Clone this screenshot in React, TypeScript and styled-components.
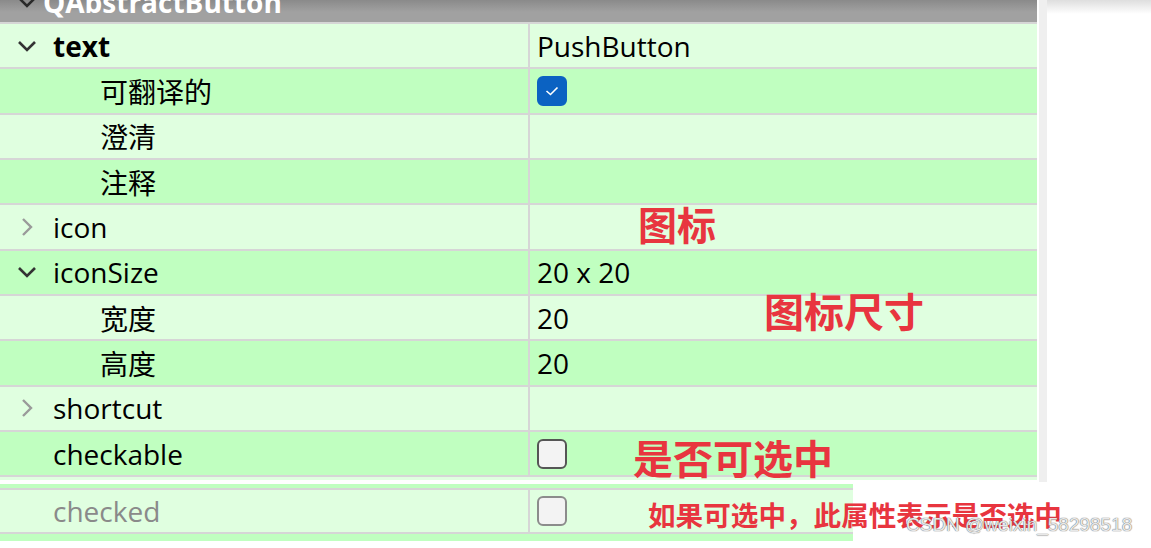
import React from 'react';
import styled, { createGlobalStyle } from 'styled-components';

const GlobalStyle = createGlobalStyle`
    html, body {
        margin: 0;
        padding: 0;
        background: #ffffff;
    }
    body {
        font-family: 'Open Sans', 'Noto Sans CJK SC', sans-serif;
    }
`;

const LIGHT = '#e0ffe0';
const DARK = '#c0ffc0';
const LINE = '#d6d6d6';

const Page = styled.div`
    position: relative;
    width: 1151px;
    height: 548px;
    overflow: hidden;
    display: flex;
    flex-direction: column;
`;

const TopArea = styled.div`
    display: flex;
    height: 480px;
`;

const Panel = styled.div`
    width: 1037px;
    height: 480px;
    overflow: hidden;
    background: ${LIGHT};
    display: flex;
    flex-direction: column;
`;

const Scrollbar = styled.div`
    width: 8px;
    height: 482px;
    margin-left: 2px;
    background: #efefef;
`;

const RightShade = styled.div`
    flex: 1;
    background: linear-gradient(#dedede, #ffffff 14px);
`;

const Header = styled.div`
    height: 22px;
    flex-shrink: 0;
    overflow: hidden;
    display: flex;
    align-items: flex-end;
    background: linear-gradient(#8a8a8a, #a1a1a1 12px);
    border-bottom: 2px solid ${LINE};
`;

const HeaderInner = styled.div`
    height: 40px;
    flex-shrink: 0;
    display: flex;
    align-items: center;
    color: #ffffff;
    font-size: 28px;
    font-weight: 700;
`;

const Row = styled.div<{ $tone: string; $h?: number }>`
    display: grid;
    grid-template-columns: 528px 2px 1fr;
    height: ${({ $h }) => $h || 43.33}px;
    flex-shrink: 0;
    background: ${({ $tone }) => $tone};
    border-bottom: 2px solid ${LINE};
`;

const Divider = styled.div`
    background: ${LINE};
`;

const LabelCell = styled.div<{ $child?: boolean; $bold?: boolean; $muted?: boolean }>`
    display: flex;
    align-items: center;
    padding-left: ${({ $child }) => ($child ? '100px' : '0')};
    font-size: 28px;
    font-weight: ${({ $bold }) => ($bold ? 700 : 400)};
    color: ${({ $muted }) => ($muted ? '#8a8a8a' : '#000000')};
    white-space: nowrap;
`;

const ArrowBox = styled.div`
    width: 53px;
    flex-shrink: 0;
    display: flex;
    align-items: center;
    justify-content: center;
`;

const ValueCell = styled.div`
    display: flex;
    align-items: center;
    padding-left: 7px;
    font-size: 28px;
    color: #000000;
    white-space: nowrap;
`;

const Box = styled.div<{ $checked?: boolean; $disabled?: boolean }>`
    width: 26px;
    height: 26px;
    border-radius: 6px;
    display: flex;
    align-items: center;
    justify-content: center;
    background: ${({ $checked }) => ($checked ? '#0b62c2' : '#f3f3f3')};
    border: 2px solid
        ${({ $checked, $disabled }) =>
            $checked ? '#0b62c2' : $disabled ? '#8c8c8c' : '#555555'};
`;

const Strip = styled.div`
    width: 853px;
    margin-top: 4px;
    display: flex;
    flex-direction: column;
`;

const Band = styled.div<{ $h: number }>`
    height: ${({ $h }) => $h}px;
    background: ${DARK};
    border-bottom: ${({ $h }) => ($h < 6 ? `2px solid ${LINE}` : 'none')};
`;

const Note = styled.div<{ $size: number }>`
    position: absolute;
    font-family: 'Noto Sans CJK SC', sans-serif;
    font-weight: 700;
    font-size: ${({ $size }) => $size}px;
    line-height: 1;
    color: #e8353f;
    white-space: nowrap;
`;

const Watermark = styled.div`
    position: absolute;
    left: 906px;
    top: 515px;
    font-family: 'Liberation Sans', sans-serif;
    font-size: 19px;
    line-height: 1;
    color: rgba(255, 255, 255, 0.85);
    text-shadow: 0 0 1px #6f6f6f, 0 0 1px #6f6f6f;
    white-space: nowrap;
`;

const Chevron = ({ open, color }: { open: boolean; color: string }) =>
    open ? (
        <svg width="20" height="12" viewBox="0 0 20 12">
            <path d="M2 2 L10 10 L18 2" fill="none" stroke={color} strokeWidth="2.6" />
        </svg>
    ) : (
        <svg width="14" height="20" viewBox="0 0 14 20">
            <path d="M3 2 L11 10 L3 18" fill="none" stroke={color} strokeWidth="2.4" />
        </svg>
    );

const CheckBox = ({ checked, disabled }: { checked?: boolean; disabled?: boolean }) => (
    <Box $checked={checked} $disabled={disabled}>
        {checked && (
            <svg width="14" height="10" viewBox="0 0 14 10">
                <path d="M1.5 5 L5.5 8.5 L12.5 1.5" fill="none" stroke="#ffffff" strokeWidth="1.6" />
            </svg>
        )}
    </Box>
);

type Prop = {
    label: string;
    arrow?: 'open' | 'closed';
    child?: boolean;
    bold?: boolean;
    value?: React.ReactNode;
};

const PROPS: Prop[] = [
    { label: 'text', arrow: 'open', bold: true, value: 'PushButton' },
    { label: '可翻译的', child: true, value: <CheckBox checked /> },
    { label: '澄清', child: true },
    { label: '注释', child: true },
    { label: 'icon', arrow: 'closed' },
    { label: 'iconSize', arrow: 'open', value: '20 x 20' },
    { label: '宽度', child: true, value: '20' },
    { label: '高度', child: true, value: '20' },
    { label: 'shortcut', arrow: 'closed' },
    { label: 'checkable', value: <CheckBox /> },
];

const App = () => {
    return (
        <Page>
            <GlobalStyle />
            <TopArea>
                <Panel>
                    <Header>
                        <HeaderInner>
                            <ArrowBox>
                                <Chevron open color="#2a2a2a" />
                            </ArrowBox>
                            <span style={{ marginLeft: -10 }}>QAbstractButton</span>
                        </HeaderInner>
                    </Header>
                    {PROPS.map((p, i) => (
                        <Row key={i} $tone={i % 2 === 0 ? LIGHT : DARK}>
                            <LabelCell $child={p.child} $bold={p.bold}>
                                {!p.child && (
                                    <ArrowBox>
                                        {p.arrow && (
                                            <Chevron
                                                open={p.arrow === 'open'}
                                                color={p.arrow === 'open' ? '#333333' : '#9a9a9a'}
                                            />
                                        )}
                                    </ArrowBox>
                                )}
                                {p.label}
                            </LabelCell>
                            <Divider />
                            <ValueCell>{p.value}</ValueCell>
                        </Row>
                    ))}
                </Panel>
                <Scrollbar />
                <RightShade />
            </TopArea>
            <Strip>
                <Band $h={4} />
                <Row $tone={LIGHT} $h={42}>
                    <LabelCell $muted>
                        <ArrowBox />
                        checked
                    </LabelCell>
                    <Divider />
                    <ValueCell>
                        <CheckBox disabled />
                    </ValueCell>
                </Row>
                <Band $h={7} />
            </Strip>

            <Note $size={39} style={{ left: 638, top: 204 }}>图标</Note>
            <Note $size={40} style={{ left: 764, top: 290 }}>图标尺寸</Note>
            <Note $size={40} style={{ left: 633, top: 437 }}>是否可选中</Note>
            <Note $size={27.6} style={{ left: 648, top: 501 }}>如果可选中，此属性表示是否选中</Note>
            <Watermark>CSDN @weixin_58298518</Watermark>
        </Page>
    );
};

export default App;
